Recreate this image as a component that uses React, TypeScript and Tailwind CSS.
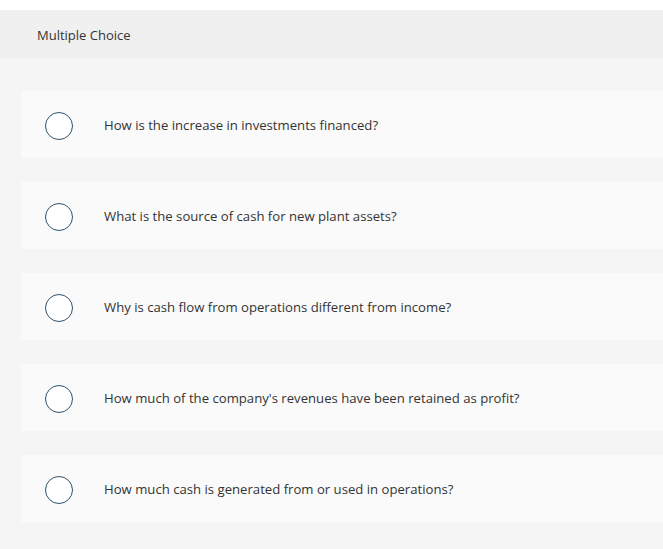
export default function App() {
  const opcoes = [
    "How is the increase in investments financed?",
    "What is the source of cash for new plant assets?",
    "Why is cash flow from operations different from income?",
    "How much of the company's revenues have been retained as profit?",
    "How much cash is generated from or used in operations?",
  ];

  return (
    <div className="w-[663px] h-[549px] bg-white pt-[10px] overflow-hidden" style={{ fontFamily: "'Open Sans', sans-serif" }}>
      <div className="h-[49px] bg-[#f0f0f0] flex items-center pl-[37px] pt-[2px] text-[13px] text-[#333]">
        Multiple Choice
      </div>
      <div className="bg-[#f5f5f5] h-[490px] pt-[32px] pl-[21px] flex flex-col gap-[24px]">
        {opcoes.map((texto) => (
          <div key={texto} className="h-[67px] bg-[#fafafa] flex items-center">
            <span className="ml-[24px] mt-[2px] w-[28px] h-[28px] rounded-full border-[1.5px] border-[#2f5169] bg-white shrink-0"></span>
            <span className="ml-[31px] pt-[3px] text-[13.15px] text-[#333]">{texto}</span>
          </div>
        ))}
      </div>
    </div>
  );
}
